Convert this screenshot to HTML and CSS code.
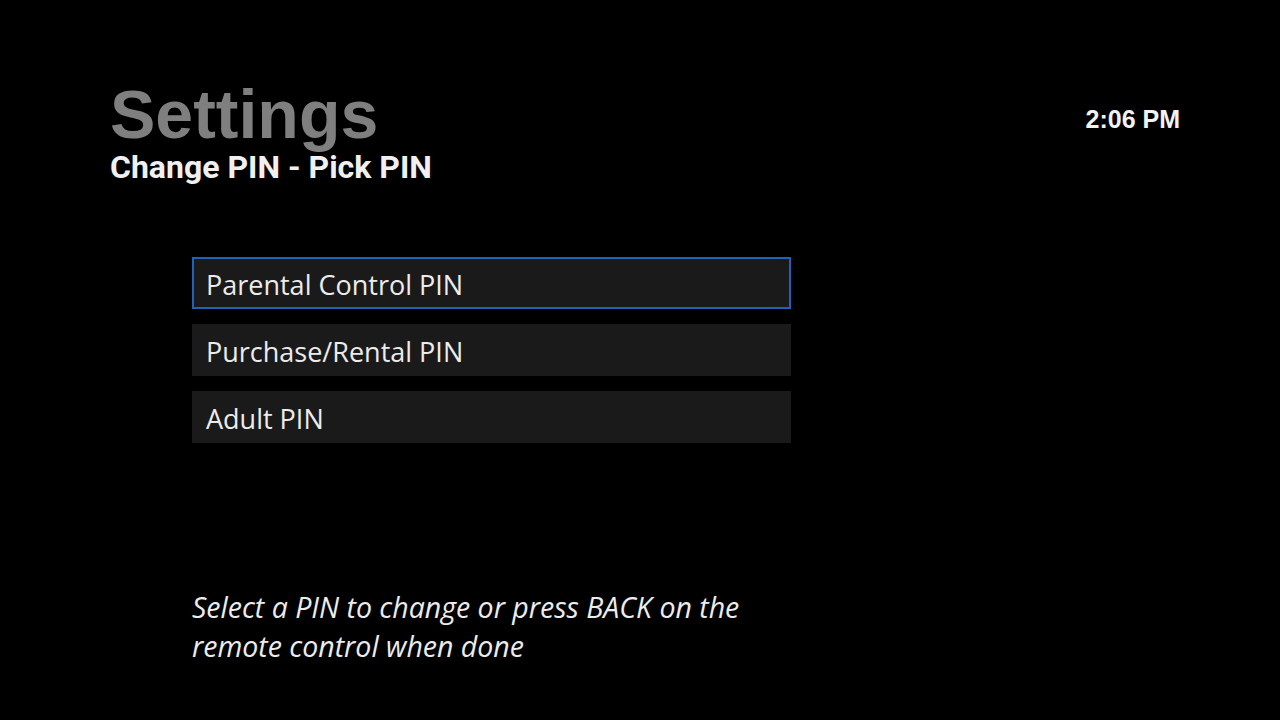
FILE: index.html
```html
<!DOCTYPE html>
<html lang="en">
<head>
<meta charset="utf-8">
<title>Settings - Change PIN</title>
<link rel="stylesheet" href="styles.css">
</head>
<body>
<div class="screen">
  <header class="header">
    <div class="titles">
      <h1 class="title">Settings</h1>
      <h2 class="subtitle">Change PIN - Pick PIN</h2>
    </div>
    <div class="clock">2:06 PM</div>
  </header>
  <main class="content">
    <ul class="menu">
      <li class="item selected">Parental Control PIN</li>
      <li class="item">Purchase/Rental PIN</li>
      <li class="item">Adult PIN</li>
    </ul>
    <p class="hint">Select a PIN to change or press BACK on the<br>remote control when done</p>
  </main>
</div>
</body>
</html>
```
FILE: styles.css
```css
* { box-sizing: border-box; margin: 0; padding: 0; }
html, body { background: #000; }
body { width: 1280px; height: 720px; overflow: hidden; }
.screen {
  width: 1280px;
  height: 720px;
  display: flex;
  flex-direction: column;
  padding: 80px 100px 0 110px;
}
.header {
  display: flex;
  justify-content: space-between;
  align-items: flex-start;
}
.title {
  font-family: "Liberation Sans", Arial, sans-serif;
  font-weight: 700;
  font-size: 68px;
  line-height: 68px;
  color: #7f7f7f;
}
.subtitle {
  font-family: Roboto, "Liberation Sans", sans-serif;
  font-weight: 700;
  font-size: 32px;
  line-height: 36px;
  color: #f0f0f0;
  margin-top: 1px;
}
.clock {
  font-family: "Liberation Sans", Arial, sans-serif;
  font-weight: 700;
  font-size: 25px;
  line-height: 30px;
  color: #f2f2f2;
  margin-top: 24px;
}
.content {
  padding-left: 82px;
  display: flex;
  flex-direction: column;
}
.menu {
  list-style: none;
  margin-top: 72px;
  width: 599px;
  display: flex;
  flex-direction: column;
  gap: 15px;
}
.item {
  height: 52px;
  background: #1a1a1a;
  border: 2px solid transparent;
  padding: 3px 0 0 12px;
  display: flex;
  align-items: center;
  font-family: "Open Sans", "Noto Sans", sans-serif;
  font-size: 27px;
  color: #ececec;
}
.item.selected {
  border-color: #1f62b8;
}
.hint {
  margin-top: 145px;
  font-family: "Open Sans", "Noto Sans", sans-serif;
  font-style: italic;
  font-size: 28.5px;
  line-height: 39px;
  color: #ececec;
}
```
